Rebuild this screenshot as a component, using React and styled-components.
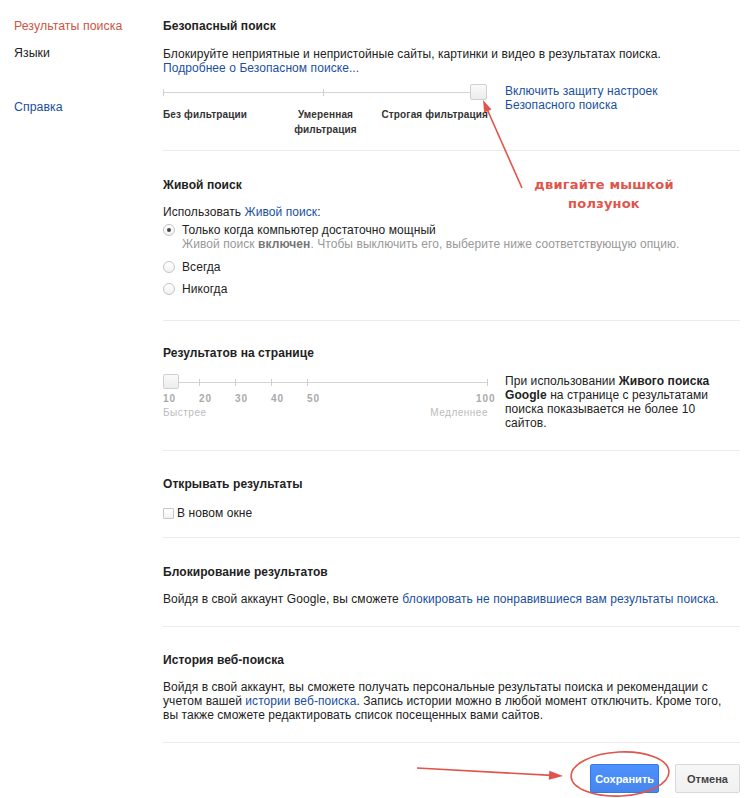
import React from 'react';
import styled, { createGlobalStyle } from 'styled-components';

const GlobalStyle = createGlobalStyle`
  body {
    margin: 0;
    background: #fff;
    font-family: "Liberation Sans", Arial, sans-serif;
    font-size: 12px;
    letter-spacing: 0.07px;
    color: #222;
  }
`;

const Page = styled.div`
  position: relative;
  display: flex;
  width: 752px;
  min-height: 798px;
`;

const Sidebar = styled.div`
  width: 163px;
  flex-shrink: 0;
  padding: 18px 0 0 14px;
  box-sizing: border-box;
  font-size: 12.3px;
`;

const NavItem = styled.div`
  line-height: 16px;
  margin-bottom: ${(p) => p.$gap || 11}px;
  color: ${(p) => (p.$active ? '#cc5544' : p.$link ? '#1a4fa0' : '#222')};
`;

const Main = styled.div`
  width: 577px;
`;

const Section = styled.div`
  padding: ${(p) => p.$top || 25}px 0 ${(p) => p.$bottom || 24}px;
  border-bottom: 1px solid #ebebeb;
`;

const Heading = styled.div`
  font-weight: bold;
  line-height: 16px;
  margin-bottom: ${(p) => p.$gap || 12}px;
`;

const Text = styled.div`
  line-height: 14px;
  max-width: ${(p) => p.$max || 577}px;
`;

const Link = styled.a`
  color: #1a4fa0;
  text-decoration: none;
  cursor: pointer;
`;

const Row = styled.div`
  display: flex;
  align-items: flex-start;
  gap: 17px;
  margin-top: ${(p) => p.$top || 0}px;
`;

const SideNote = styled.div`
  width: 212px;
  line-height: 14px;
`;

const Slider = styled.div`
  width: ${(p) => p.$width}px;
  flex-shrink: 0;
`;

const Track = styled.div`
  position: relative;
  height: ${(p) => p.$h}px;
  &::before {
    content: '';
    position: absolute;
    left: 0;
    right: ${(p) => p.$right || 0}px;
    top: 50%;
    height: 1px;
    background: #d4d4d4;
  }
`;

const Tick = styled.span`
  position: absolute;
  top: 50%;
  width: 1px;
  height: 7px;
  margin-top: -3px;
  background: #cfcfcf;
`;

const Thumb = styled.span`
  position: absolute;
  top: 0;
  width: ${(p) => p.$size}px;
  height: ${(p) => p.$size - 1}px;
  box-sizing: border-box;
  border: 1px solid #cfcfcf;
  border-radius: 2px;
  background: linear-gradient(#fafafa, #ececec);
`;

const FilterLabels = styled.div`
  display: grid;
  grid-template-columns: 1fr auto 1fr;
  margin-top: 7px;
  font-size: 10px;
  font-weight: bold;
  letter-spacing: 0.15px;
  line-height: 15px;
  color: #333;
`;

const FilterLabel = styled.div`
  text-align: ${(p) => p.$align};
`;

const NumberRow = styled.div`
  position: relative;
  height: 14px;
  margin-top: 4px;
  font-size: 10px;
  font-weight: bold;
  letter-spacing: 1px;
  color: #aaa;
`;

const NumberLabel = styled.span`
  position: absolute;
  top: 0;
`;

const SpeedRow = styled.div`
  display: flex;
  justify-content: space-between;
  font-size: 10px;
  letter-spacing: 0.5px;
  line-height: 12px;
  color: #bbb;
`;

const Options = styled.div`
  margin-top: 4px;
`;

const RadioRow = styled.div`
  display: flex;
  align-items: flex-start;
  gap: 7px;
  line-height: 14px;
  margin-top: ${(p) => p.$top || 0}px;
`;

const Radio = styled.span`
  position: relative;
  flex-shrink: 0;
  width: 12px;
  height: 12px;
  margin-top: 1px;
  box-sizing: border-box;
  border: 1px solid #c4c4c4;
  border-radius: 50%;
  background: linear-gradient(#fff, #f1f1f1);
  &::after {
    content: '';
    display: ${(p) => (p.$checked ? 'block' : 'none')};
    position: absolute;
    left: 3px;
    top: 3px;
    width: 4px;
    height: 4px;
    border-radius: 50%;
    background: #444;
  }
`;

const Hint = styled.div`
  color: #999;
  b {
    color: #777;
  }
`;

const CheckRow = styled.label`
  display: flex;
  align-items: center;
  gap: 3px;
  line-height: 14px;
`;

const Checkbox = styled.span`
  width: 11px;
  height: 11px;
  box-sizing: border-box;
  border: 1px solid #c6c6c6;
  border-radius: 1px;
  background: linear-gradient(#fff, #f3f3f3);
`;

const Buttons = styled.div`
  display: flex;
  justify-content: flex-end;
  gap: 16px;
  padding-top: 21px;
`;

const Button = styled.button`
  height: 29px;
  padding: 0 ${(p) => p.$pad}px;
  border-radius: 2px;
  font-family: "Liberation Sans", Arial, sans-serif;
  font-size: 11px;
  font-weight: bold;
  cursor: pointer;
  color: ${(p) => (p.$primary ? '#fff' : '#444')};
  border: 1px solid ${(p) => (p.$primary ? '#3079ed' : '#d9d9d9')};
  background: ${(p) =>
    p.$primary ? 'linear-gradient(#4d90fe, #4787ed)' : 'linear-gradient(#f7f7f7, #f1f1f1)'};
`;

const Overlay = styled.svg`
  position: absolute;
  left: 0;
  top: 0;
  pointer-events: none;
`;

const Callout = styled.div`
  position: absolute;
  left: 526px;
  top: 175px;
  width: 156px;
  text-align: center;
  font-family: "DejaVu Sans", Verdana, sans-serif;
  font-size: 13px;
  font-weight: bold;
  line-height: 19px;
  letter-spacing: 0.2px;
  color: #e0544b;
`;

const pageTicks = [36, 72, 108, 144, 324];
const pageNumbers = [
  { v: '10', x: 0 },
  { v: '20', x: 36 },
  { v: '30', x: 72 },
  { v: '40', x: 108 },
  { v: '50', x: 144 },
  { v: '100', x: 313 },
];

const App = () => {
  return (
    <Page>
      <GlobalStyle />
      <Sidebar>
        <NavItem $active>Результаты поиска</NavItem>
        <NavItem $gap={38}>Языки</NavItem>
        <NavItem $link>Справка</NavItem>
      </Sidebar>

      <Main>
        <Section $top={18} $bottom={13}>
          <Heading $gap={13}>Безопасный поиск</Heading>
          <Text>Блокируйте неприятные и непристойные сайты, картинки и видео в результатах поиска.</Text>
          <Text>
            <Link>Подробнее о Безопасном поиске...</Link>
          </Text>
          <Row $top={9}>
            <Slider $width={325}>
              <Track $h={16} $right={8}>
                <Tick style={{ left: 0 }} />
                <Tick style={{ left: 160 }} />
                <Thumb $size={17} style={{ left: 307 }} />
              </Track>
              <FilterLabels>
                <FilterLabel $align="left">Без фильтрации</FilterLabel>
                <FilterLabel $align="center">
                  Умеренная
                  <br />
                  фильтрация
                </FilterLabel>
                <FilterLabel $align="right">Строгая фильтрация</FilterLabel>
              </FilterLabels>
            </Slider>
            <SideNote>
              <Link>Включить защиту настроек Безопасного поиска</Link>
            </SideNote>
          </Row>
        </Section>

        <Section $top={26}>
          <Heading>Живой поиск</Heading>
          <Text>
            Использовать <Link>Живой поиск</Link>:
          </Text>
          <Options>
            <RadioRow>
              <Radio $checked />
              <div>
                <div>Только когда компьютер достаточно мощный</div>
                <Hint>
                  Живой поиск <b>включен</b>. Чтобы выключить его, выберите ниже соответствующую опцию.
                </Hint>
              </div>
            </RadioRow>
            <RadioRow $top={9}>
              <Radio />
              <div>Всегда</div>
            </RadioRow>
            <RadioRow $top={8}>
              <Radio />
              <div>Никогда</div>
            </RadioRow>
          </Options>
        </Section>

        <Section $top={24} $bottom={20}>
          <Heading $gap={13}>Результатов на странице</Heading>
          <Row>
            <Slider $width={325}>
              <Track $h={15}>
                {pageTicks.map((x) => (
                  <Tick key={x} style={{ left: x }} />
                ))}
                <Thumb $size={16} style={{ left: 0 }} />
              </Track>
              <NumberRow>
                {pageNumbers.map((n) => (
                  <NumberLabel key={n.v} style={{ left: n.x }}>
                    {n.v}
                  </NumberLabel>
                ))}
              </NumberRow>
              <SpeedRow>
                <span>Быстрее</span>
                <span>Медленнее</span>
              </SpeedRow>
            </Slider>
            <SideNote>
              При использовании <b>Живого поиска Google</b> на странице с результатами поиска показывается не более 10 сайтов.
            </SideNote>
          </Row>
        </Section>

        <Section $top={25} $bottom={17}>
          <Heading $gap={14}>Открывать результаты</Heading>
          <CheckRow>
            <Checkbox />
            В новом окне
          </CheckRow>
        </Section>

        <Section $top={26} $bottom={20}>
          <Heading>Блокирование результатов</Heading>
          <Text>
            Войдя в свой аккаунт Google, вы сможете <Link>блокировать не понравившиеся вам результаты поиска</Link>.
          </Text>
        </Section>

        <Section $top={25} $bottom={20}>
          <Heading>История веб-поиска</Heading>
          <Text $max={562}>
            Войдя в свой аккаунт, вы сможете получать персональные результаты поиска и рекомендации с учетом вашей{' '}
            <Link>истории веб-поиска</Link>. Запись истории можно в любой момент отключить. Кроме того, вы также сможете
            редактировать список посещенных вами сайтов.
          </Text>
        </Section>

        <Buttons>
          <Button $primary $pad={4}>Сохранить</Button>
          <Button $pad={11}>Отмена</Button>
        </Buttons>
      </Main>

      <Callout>
        двигайте мышкой
        <br />
        ползунок
      </Callout>

      <Overlay width="752" height="798" viewBox="0 0 752 798">
        <g stroke="#e0544b" strokeWidth="1.6" fill="none">
          <line x1="522" y1="188" x2="487" y2="109" />
          <line x1="417" y1="768" x2="552" y2="775.4" />
          <ellipse cx="620" cy="774" rx="49" ry="22" transform="rotate(-3 620 774)" />
        </g>
        <g fill="#e0544b">
          <polygon points="483,100 491.5,109.4 484.2,112.6" />
          <polygon points="563,776 548.8,779.7 549.3,770.7" />
        </g>
      </Overlay>
    </Page>
  );
};

export default App;
